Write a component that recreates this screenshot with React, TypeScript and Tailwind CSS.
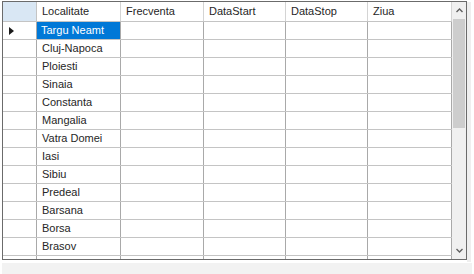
import React from "react";

const rows = [
  "Targu Neamt",
  "Cluj-Napoca",
  "Ploiesti",
  "Sinaia",
  "Constanta",
  "Mangalia",
  "Vatra Domei",
  "Iasi",
  "Sibiu",
  "Predeal",
  "Barsana",
  "Borsa",
  "Brasov",
  "",
];

const cols = [
  { name: "Localitate", w: "w-[84px]" },
  { name: "Frecventa", w: "w-[83px]" },
  { name: "DataStart", w: "w-[82px]" },
  { name: "DataStop", w: "w-[82px]" },
  { name: "Ziua", w: "w-[84px]" },
];

export default function App() {
  return (
    <div className="w-[474px] h-[274px] bg-white overflow-hidden relative font-['Liberation_Sans',Arial,sans-serif] text-[11px] text-[#262626]">
      <div className="ml-[2px] mt-[1px] w-[465px] h-[259px] border border-[#6b6b6b] flex">
        <div className="w-[449px] h-full overflow-hidden flex flex-col">
          {/* header */}
          <div className="flex h-[20px] shrink-0 border-b border-[#c4c4c4]">
            <div className="w-[34px] h-full bg-[#d9e7f4] border-r border-[#c4c4c4]" />
            {cols.map((c) => (
              <div
                key={c.name}
                className={`${c.w} h-full border-r border-[#d4d4d4] flex items-center pl-[5px] shrink-0`}
              >
                {c.name}
              </div>
            ))}
          </div>
          {rows.map((r, i) => (
            <div key={i} className="flex h-[18px] shrink-0 border-b border-[#c4c4c4]">
              <div className="w-[34px] h-full border-r border-[#a9a9a9] flex items-center pl-[6px] shrink-0">
                {i === 0 && (
                  <svg width="5" height="8" viewBox="0 0 5 8">
                    <polygon points="0,0 5,4 0,8" fill="#1a1a1a" />
                  </svg>
                )}
              </div>
              {cols.map((c, j) => (
                <div
                  key={c.name}
                  className={`${c.w} h-full border-r border-[#a9a9a9] flex items-center shrink-0 ${
                    i === 0 && j === 0 ? "bg-[#0078d7] text-white pl-[4px]" : "pl-[5px]"
                  }`}
                >
                  {j === 0 ? r : ""}
                </div>
              ))}
            </div>
          ))}
        </div>
        {/* scrollbar */}
        <div className="w-[14px] h-full bg-[#f0f0f0] flex flex-col">
          <div className="h-[17px] shrink-0 flex items-center justify-center">
            <svg width="7" height="5" viewBox="0 0 7 5">
              <polyline points="0.5,4 3.5,1 6.5,4" fill="none" stroke="#606060" strokeWidth="1.4" />
            </svg>
          </div>
          <div className="h-[109px] shrink-0 mx-[1px] bg-[#cdcdcd]" />
          <div className="flex-1" />
          <div className="h-[17px] shrink-0 flex items-center justify-center">
            <svg width="7" height="5" viewBox="0 0 7 5">
              <polyline points="0.5,1 3.5,4 6.5,1" fill="none" stroke="#606060" strokeWidth="1.4" />
            </svg>
          </div>
        </div>
      </div>
      <div className="absolute left-[467px] top-[2px] w-[4px] h-[260px] bg-[#efefef]" />
      <div className="absolute left-[2px] top-[263px] w-[470px] h-[11px] bg-[#f2f2f2]" />
    </div>
  );
}
